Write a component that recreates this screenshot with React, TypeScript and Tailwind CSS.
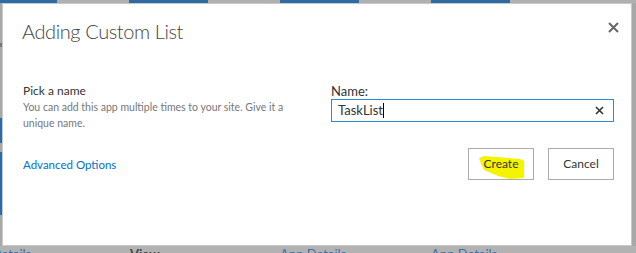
import React from "react";

const font = { fontFamily: 'Lato, "Open Sans", sans-serif' };

export default function App() {
  return (
    <div className="w-[636px] h-[253px] bg-[#b2b2b2] flex flex-col overflow-hidden" style={font}>
      {/* top strip */}
      <div className="flex h-[3px] shrink-0">
        <div className="w-[57px] bg-[#2f6ba3]" />
        <div className="w-[72px] bg-[#b0b0b0]" />
        <div className="w-[79px] bg-[#2f6ba3]" />
        <div className="w-[72px] bg-[#b0b0b0]" />
        <div className="w-[79px] bg-[#2f6ba3]" />
        <div className="w-[72px] bg-[#b0b0b0]" />
        <div className="w-[79px] bg-[#2f6ba3]" />
        <div className="flex-1 bg-[#b0b0b0]" />
      </div>
      <div className="flex h-[243px] shrink-0">
        {/* left strip */}
        <div className="w-[2px] flex flex-col">
          <div className="h-[40px] bg-[#a9a9a9]" />
          <div className="h-[4px] bg-[#777]" />
          <div className="h-[71px] bg-[#a9a9a9]" />
          <div className="h-[25px] bg-[#2f6ba3]" />
          <div className="h-[9px] bg-[#a9a9a9]" />
          <div className="h-[63px] bg-[#2f6ba3]" />
          <div className="flex-1 bg-[#a9a9a9]" />
        </div>
        {/* dialog */}
        <div className="w-[630px] bg-white border border-[#c8c8c8] flex flex-col">
          <div className="flex items-start justify-between pl-[19px] pr-[12px] pt-[14px]">
            <div className="text-[20px] font-light text-[#444] leading-[26px] tracking-[-0.4px]">Adding Custom List</div>
            <svg width="11" height="11" viewBox="0 0 11 11" className="mt-[4px]">
              <path d="M1 1 L10 10 M10 1 L1 10" stroke="#666" strokeWidth="2" />
            </svg>
          </div>
          <div className="flex pl-[20px] pt-[39px]">
            <div className="w-[308px] flex flex-col">
              <div className="text-[12px] text-[#333] leading-[16px]">Pick a name</div>
              <div className="text-[10.5px] text-[#777] leading-[16px] w-[272px]">
                You can add this app multiple times to your site. Give it a unique name.
              </div>
              <div className="mt-[26px] text-[11.5px] text-[#0072c6] leading-[16px]">Advanced Options</div>
            </div>
            <div className="w-[283px] flex flex-col">
              <div className="text-[13px] text-[#333] leading-[16px]">Name:</div>
              <div className="h-[23px] border border-[#2a8dd4] flex items-center pl-[6px] pr-[9px]">
                <span className="text-[13px] text-[#333]">TaskList</span>
                <span className="w-[1px] h-[15px] bg-black" />
                <span className="flex-1" />
                <svg width="9" height="9" viewBox="0 0 9 9">
                  <path d="M1 1 L8 8 M8 1 L1 8" stroke="#333" strokeWidth="1.6" />
                </svg>
              </div>
              <div className="flex justify-end gap-[14px] mt-[26px]">
                <div className="relative w-[66px] h-[32px] border border-[#ababab] flex items-center justify-center">
                  <svg width="66" height="32" viewBox="0 0 66 32" className="absolute left-[-1px] top-[-1px]">
                    <polygon points="11,10 16,8 52,11 56,13 56,30 42,31 30,28 16,22 13,16" fill="#f4f400" />
                  </svg>
                  <span className="relative text-[12px] text-[#333]">Create</span>
                </div>
                <div className="w-[66px] h-[32px] border border-[#ababab] flex items-center justify-center">
                  <span className="text-[12px] text-[#333]">Cancel</span>
                </div>
              </div>
            </div>
          </div>
        </div>
        <div className="flex-1 bg-[#a8a8a8]" />
      </div>
      {/* bottom strip */}
      <div className="flex-1 flex overflow-hidden ml-[-35px] bg-[#b2b2b2]">
        <div className="w-[165px] pt-[1px] text-[13px] leading-[14px] text-[#3f70a6]">App Details</div>
        <div className="w-[150px] pt-[1px] text-[13px] leading-[14px] text-[#444] font-bold">View</div>
        <div className="w-[151px] pt-[1px] text-[13px] leading-[14px] text-[#3f70a6]">App Details</div>
        <div className="w-[151px] pt-[1px] text-[13px] leading-[14px] text-[#3f70a6]">App Details</div>
      </div>
    </div>
  );
}
